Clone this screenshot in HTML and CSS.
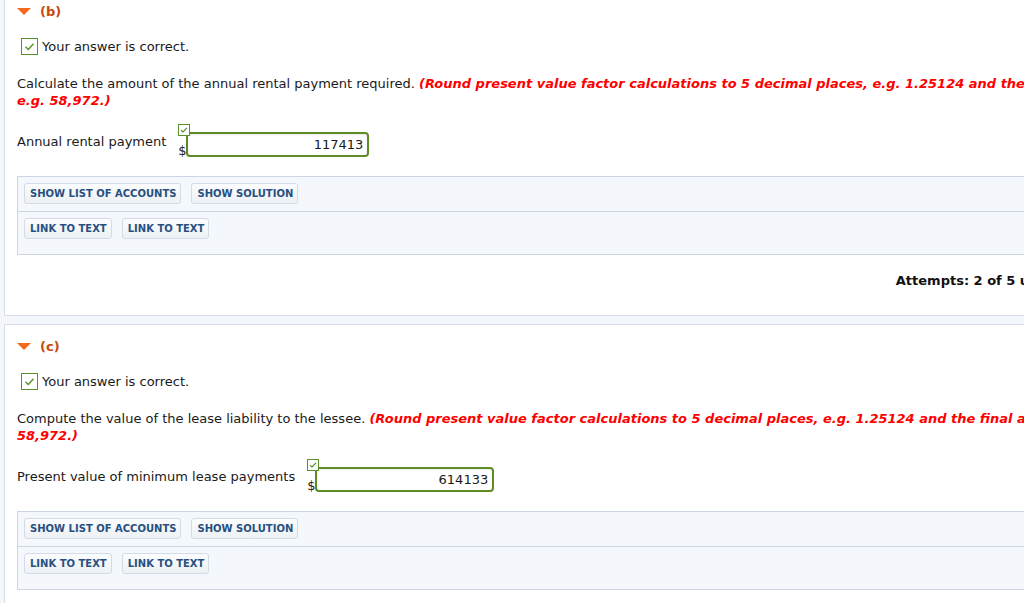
FILE: index.html
```html
<!DOCTYPE html>
<html>
<head>
<meta charset="utf-8">
<link rel="stylesheet" href="styles.css">
</head>
<body>
<div class="page">
  <section class="part part-first">
    <div class="part-head"><span class="tri"></span><span class="part-label">(b)</span></div>
    <div class="status"><span class="checkbox"><svg viewBox="0 0 17 17" width="17" height="17"><path d="M4.5 8.8 L7.3 11.5 L12.5 5.8" fill="none" stroke="#5a8f29" stroke-width="1.4"/></svg></span><span>Your answer is correct.</span></div>
    <p class="question">Calculate the amount of the annual rental payment required. <em class="hint">(Round present value factor calculations to 5 decimal places, e.g. 1.25124 and the final answer to 0 decimal places,<br>e.g. 58,972.)</em></p>
    <div class="answer">
      <span class="answer-label">Annual rental payment</span>
      <span class="field">
        <span class="mini-check"><svg viewBox="0 0 12 12" width="12" height="12"><path d="M3 6.2 L5 8 L9 3.8" fill="none" stroke="#5a8f29" stroke-width="1.2"/></svg></span>
        <span class="dollar">$</span><span class="input input-b">117413</span>
      </span>
    </div>
    <div class="panel">
      <div class="panel-row"><span class="btn">SHOW LIST OF ACCOUNTS</span><span class="btn">SHOW SOLUTION</span></div>
      <div class="panel-row panel-row-last"><span class="btn">LINK TO TEXT</span><span class="btn">LINK TO TEXT</span></div>
    </div>
    <div class="attempts">Attempts: 2 of 5 used</div>
  </section>
  <section class="part">
    <div class="part-head"><span class="tri"></span><span class="part-label">(c)</span></div>
    <div class="status"><span class="checkbox"><svg viewBox="0 0 17 17" width="17" height="17"><path d="M4.5 8.8 L7.3 11.5 L12.5 5.8" fill="none" stroke="#5a8f29" stroke-width="1.4"/></svg></span><span>Your answer is correct.</span></div>
    <p class="question">Compute the value of the lease liability to the lessee. <em class="hint">(Round present value factor calculations to 5 decimal places, e.g. 1.25124 and the final answer to 0 decimal places, e.g.<br>58,972.)</em></p>
    <div class="answer">
      <span class="answer-label">Present value of minimum lease payments</span>
      <span class="field">
        <span class="mini-check"><svg viewBox="0 0 12 12" width="12" height="12"><path d="M3 6.2 L5 8 L9 3.8" fill="none" stroke="#5a8f29" stroke-width="1.2"/></svg></span>
        <span class="dollar">$</span><span class="input input-c">614133</span>
      </span>
    </div>
    <div class="panel">
      <div class="panel-row"><span class="btn">SHOW LIST OF ACCOUNTS</span><span class="btn">SHOW SOLUTION</span></div>
      <div class="panel-row panel-row-last"><span class="btn">LINK TO TEXT</span><span class="btn">LINK TO TEXT</span></div>
    </div>
  </section>
</div>
</body>
</html>
```
FILE: styles.css
```css
html, body {
  margin: 0;
  padding: 0;
  overflow: hidden;
  background: #f3f6fa;
}
body {
  font-family: Verdana, "DejaVu Sans", sans-serif;
  font-size: 13px;
  line-height: 17px;
  color: #1a1a1a;
}
.page {
  width: 1200px;
  padding-left: 4px;
}
.part {
  background: #fff;
  border: 1px solid #d6dde8;
  border-right: 0;
  padding: 10px 0 26px 12px;
  margin-bottom: 8px;
}
.part-first {
  margin-top: -11px;
}
.part-head {
  display: flex;
  align-items: center;
  height: 22px;
  gap: 9px;
}
.tri {
  width: 0;
  height: 0;
  border-left: 7px solid transparent;
  border-right: 7px solid transparent;
  border-top: 7px solid #f26a1b;
}
.part-label {
  font-weight: bold;
  color: #c9480a;
}
.status {
  display: flex;
  align-items: center;
  gap: 4px;
  margin-top: 16px;
  margin-left: 4px;
  height: 17px;
}
.checkbox {
  width: 17px;
  height: 17px;
  box-sizing: border-box;
  border: 1px solid #5a8f29;
  display: flex;
}
.checkbox svg { margin: -1px; }
.question {
  margin: 20px 0 0 0;
  white-space: nowrap;
}
.hint {
  color: #ff0000;
  font-weight: bold;
}
.answer {
  display: flex;
  align-items: flex-start;
  gap: 12px;
  margin-top: 15px;
}
.answer-label {
  padding-top: 9px;
}
.field {
  position: relative;
  display: flex;
  align-items: flex-end;
  padding-top: 8px;
}
.mini-check {
  position: absolute;
  top: 0;
  left: 0;
  width: 12px;
  height: 12px;
  box-sizing: border-box;
  border: 1px solid #5a8f29;
  background: #fff;
  display: flex;
}
.mini-check svg { margin: -1px; }
.dollar {
  line-height: 12px;
  width: 8px;
}
.input {
  box-sizing: border-box;
  height: 25px;
  border: 2px solid #5e8b22;
  border-radius: 4px;
  text-align: right;
  padding: 2px 4px 0 0;
  line-height: 17px;
  background: #fff;
  box-shadow: inset 0 1px 2px rgba(0,0,0,0.08);
}
.input-b { width: 183px; }
.input-c { width: 179px; }
.panel {
  margin-top: 19px;
  background: #f4f7fb;
  border: 1px solid #ccd5e3;
  border-right: 0;
}
.panel-row {
  display: flex;
  gap: 10px;
  padding: 6px 6px 7px;
  border-bottom: 1px solid #ccd5e3;
}
.panel-row-last {
  border-bottom: 0;
  padding-bottom: 15px;
}
.btn {
  box-sizing: border-box;
  height: 21px;
  line-height: 19px;
  padding: 0 4px 0 5px;
  border: 1px solid #d3dbe6;
  border-radius: 3px;
  background: linear-gradient(#fbfcfd, #edf1f5);
  color: #28507f;
  font-size: 10px;
  font-weight: bold;
}
.attempts {
  margin-top: 17px;
  text-align: right;
  padding-right: 149px;
  font-weight: bold;
  color: #111;
}
```
